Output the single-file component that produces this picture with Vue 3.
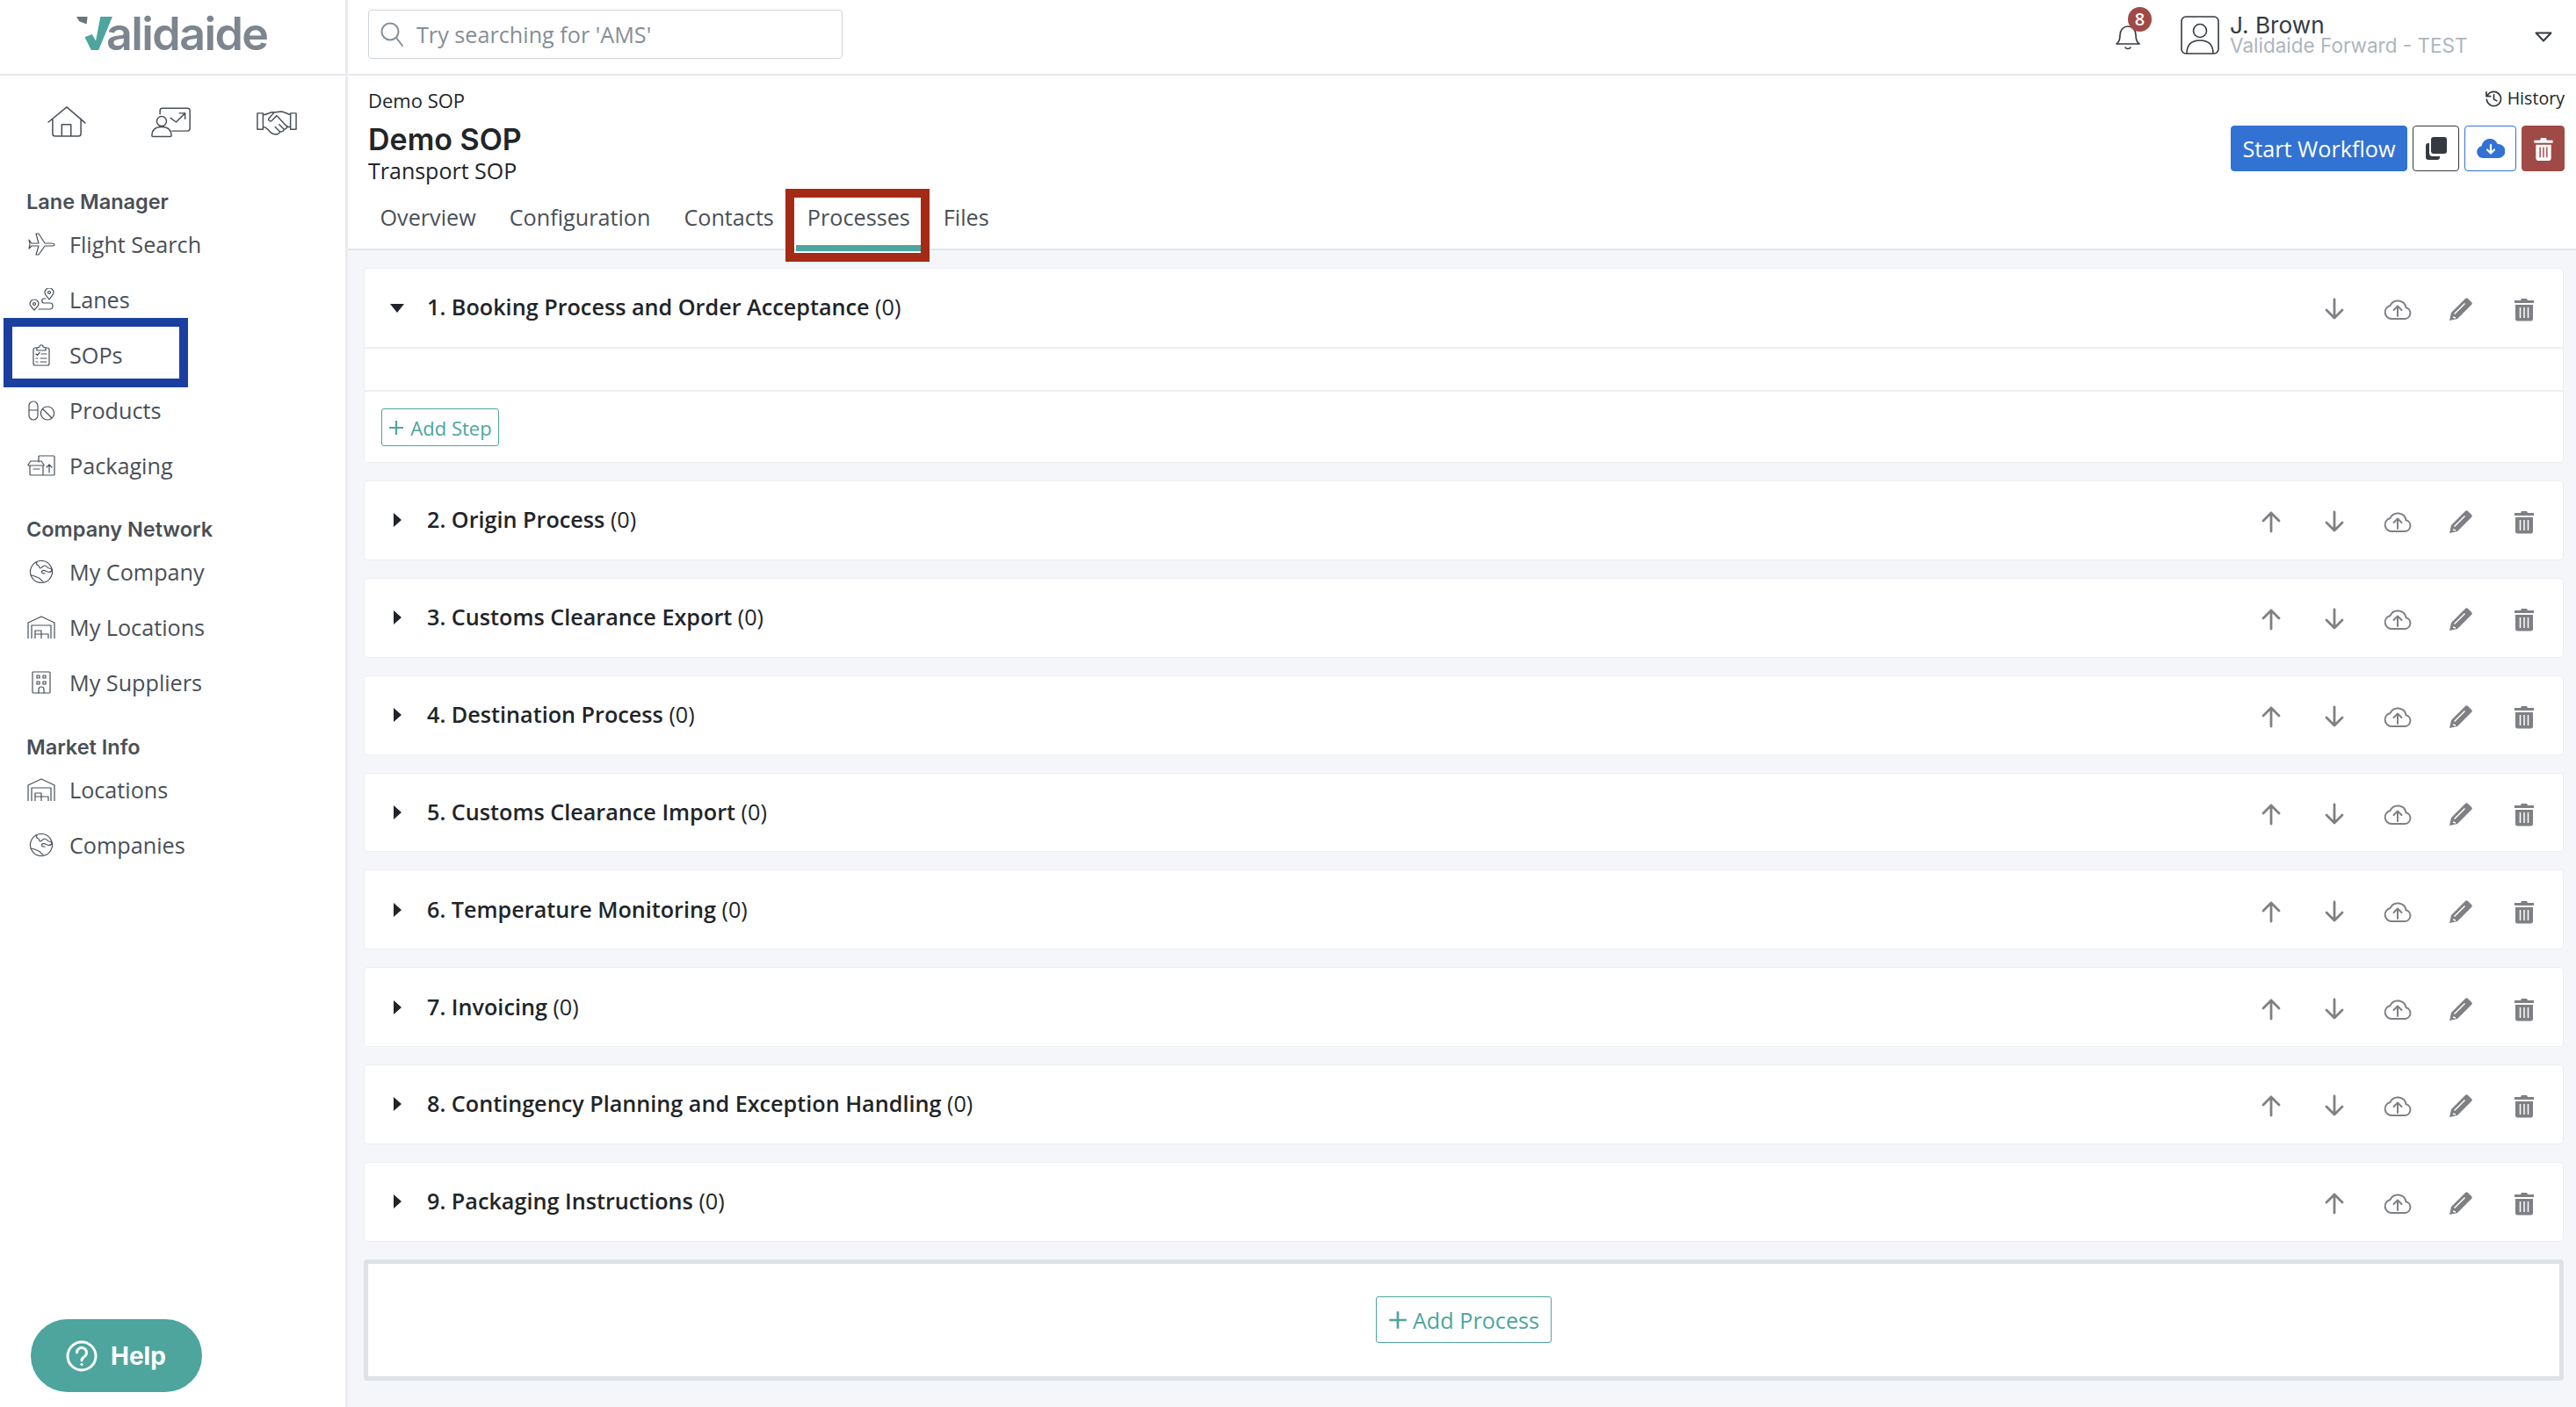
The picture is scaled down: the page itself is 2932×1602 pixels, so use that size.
<template>
  <div class="app">
    <aside class="sidebar">
      <div class="brand">
        <svg class="brand-mark" viewBox="0 0 40 38" aria-hidden="true">
          <polygon class="mark-grey" points="0,1 12,1 11,9 3,6" />
          <polygon class="mark-teal" points="9,23 17,20 21,27 26,1 39,1 24,37 16,37" />
        </svg>
        <span class="brand-text">alidaide</span>
      </div>

      <div class="shortcuts">
        <svg viewBox="0 0 46 38" class="shortcut">
          <path d="M1 19L23 1l22 19M6 15v18a3 3 0 0 0 3 3h28a3 3 0 0 0 3-3V15M17 36V22h11v14" />
        </svg>
        <svg viewBox="0 0 50 38" class="shortcut">
          <path d="M14 2h31a3 3 0 0 1 3 3v22a3 3 0 0 1-3 3H26M14 2a3 3 0 0 0-3 3v4M24 14l7 5 11-11M35 8h7v7" />
          <circle cx="13" cy="18" r="6" />
          <path d="M1 36c0-8 5-11 12-11s12 3 12 11c0 1-1 1-2 1H3c-1 0-2 0-2-1z" />
        </svg>
        <svg viewBox="0 0 50 32" class="shortcut">
          <path d="M1 5h7v20H1zM49 5h-7v20h7zM8 7c5 0 9-4 14-3l8-1c4 0 8 3 12 4M42 22h-4L25 8l-6 6c-2 2-5 0-4-2l6-7M8 22c3 0 5 2 7 4 3 4 5 5 8 5 3 1 5-1 6-3 3 0 5-1 5-3 3 0 4-3 4-4M29 28l-6-6M34 25l-6-6" />
        </svg>
      </div>

      <nav>
        <div v-for="group in navGroups" :key="group.title" class="nav-group">
          <div class="nav-title">{{ group.title }}</div>
          <a v-for="item in group.items" :key="item.label" class="nav-item">
            <svg class="nav-icon" viewBox="0 0 32 26">
              <path v-for="d in navIcons[item.icon]" :key="d" :d="d" />
            </svg>
            <span>{{ item.label }}</span>
            <span v-if="item.label === 'SOPs'" class="mark-blue"></span>
          </a>
        </div>
      </nav>

      <button class="help">
        <svg viewBox="0 0 36 36" class="help-icon">
          <circle cx="18" cy="18" r="16" />
          <path d="M12.5 14a5.5 5.5 0 1 1 8.4 4.7c-2 1.2-2.9 2.2-2.9 4.3" />
          <circle class="dot" cx="18" cy="27.5" r="1.6" />
        </svg>
        Help
      </button>
    </aside>

    <div class="main">
      <header class="topbar">
        <div class="search">
          <svg viewBox="0 0 26 28" class="search-icon">
            <circle cx="11" cy="11" r="9.5" />
            <path d="M18 18l7 9" />
          </svg>
          <span>Try searching for 'AMS'</span>
        </div>
        <div class="bell">
          <svg viewBox="0 0 28 32">
            <path d="M1 25c3-2 4-5 4-10 0-6 4-10 9-10s9 4 9 10c0 5 1 8 4 10zM11 29c1 2 5 2 6 0" />
          </svg>
          <span class="badge">8</span>
        </div>
        <svg viewBox="0 0 44 44" class="avatar">
          <rect x="1" y="1" width="42" height="42" rx="5" />
          <circle cx="22" cy="17" r="7.5" />
          <path d="M7 43c0-10 5-15 15-15s15 5 15 15" />
        </svg>
        <div class="user">
          <div class="user-name">J. Brown</div>
          <div class="user-org">Validaide Forward - TEST</div>
        </div>
        <svg viewBox="0 0 20 12" class="user-caret">
          <path d="M1.5 1.5h17L10 10.5z" />
        </svg>
      </header>

      <section class="page-head">
        <div class="head-left">
          <div class="crumb">Demo SOP</div>
          <h1>Demo SOP</h1>
          <div class="subtitle">Transport SOP</div>
        </div>
        <div class="head-right">
          <div class="history">
            <svg viewBox="0 0 20 20">
              <path d="M1 2v5h5M2 7a8.5 8.5 0 1 1-.5 4M10 5v5.5l3.5 2" />
            </svg>
            History
          </div>
          <div class="head-actions">
            <button class="btn-start">Start Workflow</button>
            <button class="btn-copy">
              <svg viewBox="0 0 26 28">
                <rect x="7" y="1" width="18" height="19" rx="3" />
                <path d="M5 8H4a3 3 0 0 0-3 3v13a3 3 0 0 0 3 3h10a3 3 0 0 0 3-3v-1H9a4 4 0 0 1-4-4z" />
              </svg>
            </button>
            <button class="btn-cloud">
              <svg viewBox="0 0 32 22">
                <path d="M7 22a7 7 0 0 1-1.500-13.800A9.500 9.500 0 0 1 23.800 6 8 8 0 0 1 25 22z" />
                <path class="arrow" d="M16 7v9M12 12.500l4 4 4-4" />
              </svg>
            </button>
            <button class="btn-trash">
              <svg viewBox="0 0 22 28">
                <path d="M0 4h22v3H0zM7 4l1-3h6l1 3zM2 9h18v16a3 3 0 0 1-3 3H5a3 3 0 0 1-3-3z" />
                <path class="slot" d="M7 12v12M11 12v12M15 12v12" />
              </svg>
            </button>
          </div>
        </div>
      </section>

      <nav class="tabs">
        <a v-for="tab in tabs" :key="tab" class="tab" :class="{ active: tab === 'Processes' }">
          {{ tab }}
          <span v-if="tab === 'Processes'" class="mark-red"></span>
        </a>
      </nav>

      <main class="content">
        <div v-for="(name, i) in processes" :key="name" class="card" :class="{ open: i === 0 }">
          <div class="card-head">
            <svg class="caret" viewBox="0 0 18 18">
              <path v-if="i === 0" d="M1 5h16l-8 10z" />
              <path v-else d="M5 1l9 8-9 8z" />
            </svg>
            <span class="card-title"><b>{{ i + 1 }}. {{ name }}</b> (0)</span>
            <div class="card-actions">
              <svg v-for="a in actionsFor(i)" :key="a" class="action" viewBox="0 0 32 28">
                <path v-for="p in actionIcons[a]" :key="p.d" :class="p.c" :d="p.d" />
              </svg>
            </div>
          </div>
          <template v-if="i === 0">
            <div class="card-empty"></div>
            <div class="card-foot">
              <button class="add add-step">
                <svg class="plus" viewBox="0 0 18 18"><path d="M9 1v16M1 9h16" /></svg>
                Add Step
              </button>
            </div>
          </template>
        </div>
        <div class="add-box">
          <button class="add add-process">
            <svg class="plus" viewBox="0 0 18 18"><path d="M9 1v16M1 9h16" /></svg>
            Add Process
          </button>
        </div>
      </main>
    </div>
  </div>
</template>

<script setup>
const navGroups = [
  {
    title: 'Lane Manager',
    items: [
      { label: 'Flight Search', icon: 'plane' },
      { label: 'Lanes', icon: 'route' },
      { label: 'SOPs', icon: 'clipboard' },
      { label: 'Products', icon: 'pills' },
      { label: 'Packaging', icon: 'box' },
    ],
  },
  {
    title: 'Company Network',
    items: [
      { label: 'My Company', icon: 'globe' },
      { label: 'My Locations', icon: 'warehouse' },
      { label: 'My Suppliers', icon: 'building' },
    ],
  },
  {
    title: 'Market Info',
    items: [
      { label: 'Locations', icon: 'warehouse' },
      { label: 'Companies', icon: 'globe' },
    ],
  },
]

const navIcons = {
  plane: [
    'M2 8l3 4h8L10 1h3l7 11h7c2 0 4 .5 4 1.500S29 15 27 15h-7l-7 10h-3l3-10H5l-3 3 1-5z',
  ],
  route: [
    'M25 13c-3-4-5-6-5-8a5 5 0 0 1 10 0c0 2-2 4-5 8z',
    'M25 3.500a1.500 1.500 0 1 0 .01 0z',
    'M8 25c-3-3-5-5-5-7a5 5 0 0 1 10 0c0 2-2 4-5 7z',
    'M8 16.500a1.500 1.500 0 1 0 .01 0z',
    'M21 12h-2c-3 0-3 5 0 5h7c4 0 4 7 0 7H13',
  ],
  clipboard: [
    'M11 5H9a2 2 0 0 0-2 2v16a2 2 0 0 0 2 2h14a2 2 0 0 0 2-2V7a2 2 0 0 0-2-2h-2',
    'M11 8V5l3-1c0-3 4-3 4 0l3 1v3z',
    'M10 12l1.500 1.500 2.500-3M16 12h6M10 17h2M15 17h7M10 21h2M15 21h7',
  ],
  pills: [
    'M2 8a5 5 0 0 1 10 0v11a5 5 0 0 1-10 0zM2 13h10',
    'M23 9a7.500 7.500 0 1 0 .01 0zM18 12l10 10',
  ],
  box: [
    'M13 9V3a1 1 0 0 1 1-1h16a1 1 0 0 1 1 1v20a1 1 0 0 1-1 1H19',
    'M1 12l3-4h12l3 4v1H1zM3 13v10a1 1 0 0 0 1 1h14V13M7 17h7',
    'M25 21v-9M22 15l3-3 3 3',
  ],
  globe: [
    'M16 .500a12.500 12.500 0 1 0 .01 0z',
    'M11 2c-2 2 1 4 2 4s0 3 2 3 2-3 5-3 2 3 5 3 3 3 3 3-2 2-5 1-4-3-6-1 1 3 3 3M4 17c4 0 6 2 9 3s2 3 5 4',
  ],
  warehouse: [
    'M1 26V8L16 1l15 7v18M5 26V11h22v15',
    'M9 26v-9h7v4h8v5M9 21h15M16 17v9',
  ],
  building: [
    'M7 1h18a1 1 0 0 1 1 1v22a1 1 0 0 1-1 1H7a1 1 0 0 1-1-1V2a1 1 0 0 1 1-1z',
    'M11 5h3v3h-3zM18 5h3v3h-3zM11 12h3v3h-3zM18 12h3v3h-3zM13 25v-4a3 3 0 0 1 6 0v4',
  ],
}

const actionIcons = {
  up: [{ c: 'ln thick', d: 'M16 25V4M7 13l9-9 9 9' }],
  down: [{ c: 'ln thick', d: 'M16 3v21M7 15l9 9 9-9' }],
  cloud: [
    { c: 'ln', d: 'M9 25h15a6.500 6.500 0 0 0 1.500-12.800A9.500 9.500 0 0 0 7.500 10 7.600 7.600 0 0 0 9 25z' },
    { c: 'ln', d: 'M16 22V11M11.500 15l4.500-4.500 4.500 4.500' },
  ],
  pencil: [
    { c: 'fl', d: 'M3 27l2-9L21 2c1-1 2-1 3 0l4 4c1 1 1 2 0 3L12 25z' },
    { c: 'wh', d: 'M8.500 19.500L20.500 7.500M7 23l3 1' },
  ],
  trash: [
    { c: 'fl', d: 'M5 4h22v3H5zM12 4l1-2h6l1 2zM6 9h20v16a2.500 2.500 0 0 1-2.500 2.500h-15A2.500 2.500 0 0 1 6 25z' },
    { c: 'wh', d: 'M11.500 12v12M16 12v12M20.500 12v12' },
  ],
}

const tabs = ['Overview', 'Configuration', 'Contacts', 'Processes', 'Files']

const processes = [
  'Booking Process and Order Acceptance',
  'Origin Process',
  'Customs Clearance Export',
  'Destination Process',
  'Customs Clearance Import',
  'Temperature Monitoring',
  'Invoicing',
  'Contingency Planning and Exception Handling',
  'Packaging Instructions',
]

const actionsFor = (i) => {
  const list = []
  if (i > 0) list.push('up')
  if (i < processes.length - 1) list.push('down')
  return [...list, 'cloud', 'pencil', 'trash']
}
</script>

<style>
html,
body {
  margin: 0;
  background: #fff;
}
</style>

<style scoped>
.app {
  display: flex;
  height: 1602px;
  overflow: hidden;
  font-family: "Open Sans", "Liberation Sans", sans-serif;
  color: #212529;
}

.sidebar {
  position: relative;
  width: 393px;
  flex-shrink: 0;
  border-right: 3px solid #e9ebef;
  background: #fff;
}

.brand {
  display: flex;
  align-items: center;
  height: 84px;
  padding-left: 87px;
  border-bottom: 2px solid #e8e9ec;
}

.brand-mark {
  width: 42px;
  height: 40px;
  margin-top: -8px;
  margin-right: -8px;
}

.mark-grey {
  fill: #6c747c;
}

.mark-teal {
  fill: #4da59d;
}

.brand-text {
  font-family: "Inter", sans-serif;
  font-size: 52px;
  font-weight: 600;
  letter-spacing: -1.6px;
  color: #7d858e;
  line-height: 1;
  margin-top: -6px;
}

.shortcuts {
  display: grid;
  grid-template-columns: repeat(3, 119.5px);
  justify-items: center;
  align-items: center;
  height: 106px;
  padding-left: 16px;
}

.shortcut {
  height: 36px;
  width: 46px;
  fill: none;
  stroke: #495057;
  stroke-width: 1.6;
  stroke-linecap: round;
  stroke-linejoin: round;
}

.nav-group {
  margin-top: 22px;
}

.nav-group + .nav-group {
  margin-top: 26px;
}

.nav-group + .nav-group + .nav-group {
  margin-top: 27px;
}

.nav-title {
  height: 32px;
  line-height: 32px;
  padding-left: 30px;
  font-family: "Inter", sans-serif;
  font-size: 23.5px;
  font-weight: 600;
  color: #495057;
}

.nav-item {
  position: relative;
  display: flex;
  align-items: center;
  height: 63px;
  padding-left: 31px;
  font-size: 25.2px;
  color: #495057;
}

.nav-icon {
  width: 32px;
  height: 26px;
  margin-right: 16px;
  fill: none;
  stroke: #495057;
  stroke-width: 1.2;
  stroke-linecap: round;
  stroke-linejoin: round;
}

.mark-blue {
  position: absolute;
  left: 4px;
  top: -10px;
  width: 210px;
  height: 79px;
  box-sizing: border-box;
  border: 10px solid #1a3fa0;
}

.help {
  position: absolute;
  left: 35px;
  top: 1502px;
  display: flex;
  align-items: center;
  gap: 15px;
  width: 195px;
  height: 83px;
  padding: 0 0 0 40px;
  border: none;
  border-radius: 42px;
  background: #4da59d;
  color: #fff;
  font-family: "Inter", sans-serif;
  font-size: 28px;
  font-weight: 700;
}

.help-icon {
  width: 36px;
  height: 36px;
  fill: none;
  stroke: #fff;
  stroke-width: 3;
  stroke-linecap: round;
}

.help-icon .dot {
  fill: #fff;
  stroke: none;
}

.main {
  flex: 1;
  min-width: 0;
  display: flex;
  flex-direction: column;
}

.topbar {
  display: flex;
  align-items: center;
  height: 84px;
  padding-left: 23px;
  border-bottom: 2px solid #e8e9ec;
  box-sizing: content-box;
}

.search {
  display: flex;
  align-items: center;
  gap: 15px;
  width: 540px;
  height: 56px;
  margin-top: -6px;
  box-sizing: border-box;
  padding-left: 13px;
  border: 1.5px solid #ced4da;
  border-radius: 4px;
  font-size: 25.2px;
  color: #868e96;
}

.search-icon {
  width: 26px;
  height: 28px;
  fill: none;
  stroke: #868e96;
  stroke-width: 2;
  stroke-linecap: round;
}

.bell {
  position: relative;
  width: 28px;
  height: 32px;
  margin-left: auto;
  margin-right: 46px;
  margin-top: -3px;
}

.bell svg {
  display: block;
  width: 28px;
  height: 32px;
  fill: none;
  stroke: #343a40;
  stroke-width: 1.6;
  stroke-linejoin: round;
  stroke-linecap: round;
}

.badge {
  position: absolute;
  left: 14px;
  top: -17px;
  width: 27px;
  height: 28px;
  border-radius: 50%;
  background: #a04a47;
  color: #fff;
  font-size: 20px;
  font-weight: 600;
  line-height: 28px;
  text-align: center;
}

.avatar {
  width: 44px;
  height: 44px;
  margin-top: -4px;
  margin-right: 12px;
  fill: none;
  stroke: #343a40;
  stroke-width: 1.6;
}

.user {
  width: 347px;
  margin-top: -4px;
  font-family: "Inter", sans-serif;
  line-height: 23px;
}

.user-name {
  font-size: 26.2px;
  color: #343a40;
}

.user-org {
  font-size: 22.5px;
  color: #adb5bd;
}

.user-caret {
  width: 20px;
  height: 12px;
  margin-right: 27px;
  fill: none;
  stroke: #343a40;
  stroke-width: 2;
  stroke-linejoin: round;
}

.page-head {
  display: flex;
  justify-content: space-between;
  padding: 13px 13px 0 23px;
  height: 120px;
  box-sizing: border-box;
}

.crumb {
  font-size: 22px;
  line-height: 30px;
}

h1 {
  margin: 8px 0 0;
  font-family: "Inter", sans-serif;
  font-size: 34px;
  font-weight: 600;
  line-height: 44px;
  height: 41px;
}

.subtitle {
  font-size: 25px;
  line-height: 32px;
}

.head-right {
  display: flex;
  flex-direction: column;
  align-items: flex-end;
}

.history {
  display: flex;
  align-items: center;
  gap: 6px;
  font-size: 19.6px;
  line-height: 26px;
}

.history svg {
  width: 19px;
  height: 19px;
  fill: none;
  stroke: #343a40;
  stroke-width: 1.8;
  stroke-linecap: round;
  stroke-linejoin: round;
}

.head-actions {
  display: flex;
  gap: 6px;
  margin-top: 18px;
}

.head-actions button {
  display: flex;
  align-items: center;
  justify-content: center;
  height: 52px;
  padding: 0;
  border-radius: 4px;
  font-family: inherit;
}

.btn-start {
  width: 201px;
  border: 1.5px solid #3272d3;
  background: #3272d3;
  color: #fff;
  font-size: 25.2px;
}

.btn-copy {
  width: 53px;
  border: 1.5px solid #343a40;
  background: #fff;
}

.btn-copy svg {
  width: 26px;
  height: 28px;
  fill: #343a40;
}

.btn-cloud {
  width: 59px;
  border: 1.5px solid #3272d3;
  background: #fff;
}

.btn-cloud svg {
  width: 32px;
  height: 22px;
  fill: #3272d3;
}

.btn-cloud .arrow {
  fill: none;
  stroke: #fff;
  stroke-width: 2.2;
  stroke-linecap: round;
  stroke-linejoin: round;
}

.btn-trash {
  width: 49px;
  border: 1.5px solid #a04a47;
  background: #a04a47;
}

.btn-trash svg {
  width: 22px;
  height: 27px;
  fill: #fff;
}

.btn-trash .slot {
  fill: none;
  stroke: #a04a47;
  stroke-width: 1.5;
}

.tabs {
  display: flex;
  height: 79px;
  padding-left: 17.5px;
  border-bottom: 2px solid #e4e6ea;
  box-sizing: border-box;
  flex-shrink: 0;
}

.tab {
  position: relative;
  height: 79px;
  box-sizing: border-box;
  padding: 23px 19px 0;
  font-size: 25.2px;
  line-height: 36px;
  color: #495057;
  white-space: nowrap;
}

.tab.active::after {
  content: "";
  position: absolute;
  left: 6px;
  right: 7px;
  bottom: -1px;
  height: 7px;
  background: #4da59d;
}

.mark-red {
  position: absolute;
  left: -6px;
  right: -3px;
  top: 9px;
  height: 83px;
  box-sizing: border-box;
  border: 10px solid #a52a16;
  pointer-events: none;
}

.content {
  flex: 1;
  display: flex;
  flex-direction: column;
  gap: 20px;
  padding: 20px 14px 0 18px;
  background: #f5f6fa;
}

.card {
  flex-shrink: 0;
  box-sizing: border-box;
  background: #fff;
  border: 1px solid #eceef1;
  border-radius: 4px;
}

.card-head {
  display: flex;
  align-items: center;
  height: 88.85px;
  padding-right: 8px;
}

.caret {
  width: 18px;
  height: 18px;
  margin-left: 28px;
  margin-right: 25px;
  fill: #212529;
}

.card-title {
  margin-top: -2px;
  font-size: 25.2px;
  white-space: nowrap;
}

.card-title b {
  font-weight: 600;
}

.card-actions {
  display: flex;
  margin-left: auto;
  margin-top: 4px;
}

.action {
  width: 32px;
  height: 28px;
  padding: 0 20px;
}

.ln {
  fill: none;
  stroke: #7f8084;
  stroke-width: 2;
  stroke-linecap: round;
  stroke-linejoin: round;
}

.ln.thick {
  stroke-width: 2.8;
}

.fl {
  fill: #7f8084;
}

.wh {
  fill: none;
  stroke: #fff;
  stroke-width: 1.5;
}

.card-empty {
  height: 51.5px;
  box-sizing: border-box;
  border-top: 2px solid #eceef1;
  border-bottom: 2px solid #eceef1;
}

.card-foot {
  height: 79.65px;
  padding: 19px 0 0 19px;
  box-sizing: border-box;
}

.add {
  display: inline-flex;
  align-items: center;
  justify-content: center;
  padding: 0;
  background: #fff;
  border: 1.5px solid #4da59d;
  border-radius: 3px;
  color: #4da59d;
  font-family: inherit;
}

.plus {
  width: 18px;
  height: 18px;
  margin-right: 7px;
  fill: none;
  stroke: #4da59d;
  stroke-width: 2.2;
}

.add-step {
  width: 134px;
  height: 43px;
  font-size: 22px;
}

.add-box {
  display: flex;
  align-items: center;
  justify-content: center;
  flex-shrink: 0;
  height: 138px;
  box-sizing: border-box;
  background: #fff;
  border: 5px solid #dee2e6;
  border-radius: 4px;
}

.add-process {
  width: 200px;
  height: 53px;
  font-size: 25.2px;
}

.add-process .plus {
  width: 22px;
  height: 22px;
  margin-right: 6px;
}
</style>
